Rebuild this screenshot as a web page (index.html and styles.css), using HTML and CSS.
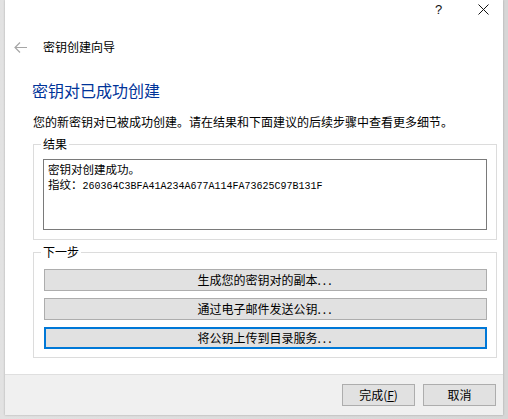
FILE: index.html
```html
<!DOCTYPE html>
<html lang="zh-CN">
<head>
  <meta charset="UTF-8">
  <meta name="viewport" content="width=device-width, initial-scale=1.0">
  <title>密钥创建向导</title>
  <link rel="stylesheet" href="styles.css">
</head>
<body>
  <div class="window">
    <div class="caption">
      <span class="cap-btn help">?</span>
      <span class="cap-btn close">
        <svg width="11" height="11" viewBox="0 0 11 11"><path d="M0.5 0.5 L10.5 10.5 M10.5 0.5 L0.5 10.5" stroke="#111" stroke-width="1" fill="none"/></svg>
      </span>
    </div>

    <div class="nav">
      <svg class="back" width="13" height="11" viewBox="0 0 13 11"><path d="M1 5.5 H13 M6 0.5 L1 5.5 L6 10.5" stroke="#a6a6a6" stroke-width="1.2" fill="none"/></svg>
      <span class="nav-title">密钥创建向导</span>
    </div>

    <div class="page">
      <h1 class="heading">密钥对已成功创建</h1>
      <p class="intro">您的新密钥对已被成功创建。请在结果和下面建议的后续步骤中查看更多细节。</p>

      <fieldset class="group result">
        <legend>结果</legend>
        <div class="result-box">
          <div class="result-line">密钥对创建成功。</div>
          <div class="result-line">指纹：<span class="hex">260364C3BFA41A234A677A114FA73625C97B131F</span></div>
        </div>
      </fieldset>

      <fieldset class="group next">
        <legend>下一步</legend>
        <div class="steps">
          <button class="step">生成您的密钥对的副本<span class="dots">...</span></button>
          <button class="step">通过电子邮件发送公钥<span class="dots">...</span></button>
          <button class="step focus">将公钥上传到目录服务<span class="dots">...</span></button>
        </div>
      </fieldset>
    </div>

    <div class="footer">
      <button class="dlg-btn">完成(<u>F</u>)</button>
      <button class="dlg-btn">取消</button>
    </div>
  </div>
</body>
</html>
```

FILE: styles.css
```css
* {
  margin: 0;
  padding: 0;
  box-sizing: border-box;
}

body {
  height: 419px;
  overflow: hidden;
  background: linear-gradient(90deg, #e2e2e2, #d6d6d6);
  font-family: "Noto Sans CJK SC", sans-serif;
  font-size: 12px;
  color: #000;
}

.window {
  margin-left: 5px;
  width: 498px;
  height: 415px;
  background: #fff;
  display: flex;
  flex-direction: column;
  box-shadow: 0 0 2px rgba(0, 0, 0, 0.25);
}

/* caption bar */
.caption {
  height: 19px;
  display: flex;
  justify-content: flex-end;
}

.cap-btn {
  height: 19px;
  display: flex;
  align-items: center;
  justify-content: center;
}

.help {
  width: 49px;
  font-family: "Liberation Sans", sans-serif;
  font-size: 13px;
  color: #111;
}

.close {
  width: 40px;
}

/* back arrow + wizard title */
.nav {
  margin-top: 16px;
  height: 24px;
  display: flex;
  align-items: center;
}

.back {
  margin-left: 9px;
}

.nav-title {
  margin-left: 16px;
  line-height: 16px;
}

.page {
  padding: 0 6px 0 28px;
}

.heading {
  margin-top: 20px;
  margin-left: -1px;
  font-size: 16px;
  font-weight: 400;
  line-height: 22px;
  color: #003399;
}

.intro {
  margin-top: 13px;
  line-height: 16px;
}

/* group boxes */
.group {
  border: 1px solid #dcdcdc;
}

.group legend {
  margin-left: -2px;
  padding: 0 2px;
  line-height: 16px;
}

.result {
  margin-top: 6px;
  padding: 7px 9px 9px 9px;
}

.result-box {
  height: 71px;
  border: 1px solid #7a7a7a;
  padding: 2px 4px;
}

.result-line {
  height: 15px;
  line-height: 15px;
  font-size: 11.5px;
}

.hex {
  font-family: "Liberation Mono", monospace;
  font-size: 10px;
}

.next {
  margin-top: 4px;
  padding: 9px 9px 8px 10px;
}

.next legend {
  margin-left: -3px;
}

.steps {
  display: flex;
  flex-direction: column;
  gap: 7px;
}

.step,
.dlg-btn {
  height: 22px;
  background: #e1e1e1;
  border: 1px solid #adadad;
  font-family: inherit;
  font-size: 12px;
  line-height: 18px;
  color: #000;
}

.step {
  width: 100%;
}

.dots {
  letter-spacing: 2px;
}

.step.focus {
  border: 2px solid #0078d7;
}

/* bottom button bar */
.footer {
  margin-top: auto;
  height: 41px;
  background: #f0f0f0;
  border-top: 1px solid #dfdfdf;
  display: flex;
  justify-content: flex-end;
  align-items: flex-start;
  gap: 8px;
  padding: 9px 7px 0 0;
}

.dlg-btn {
  width: 73px;
}
```
